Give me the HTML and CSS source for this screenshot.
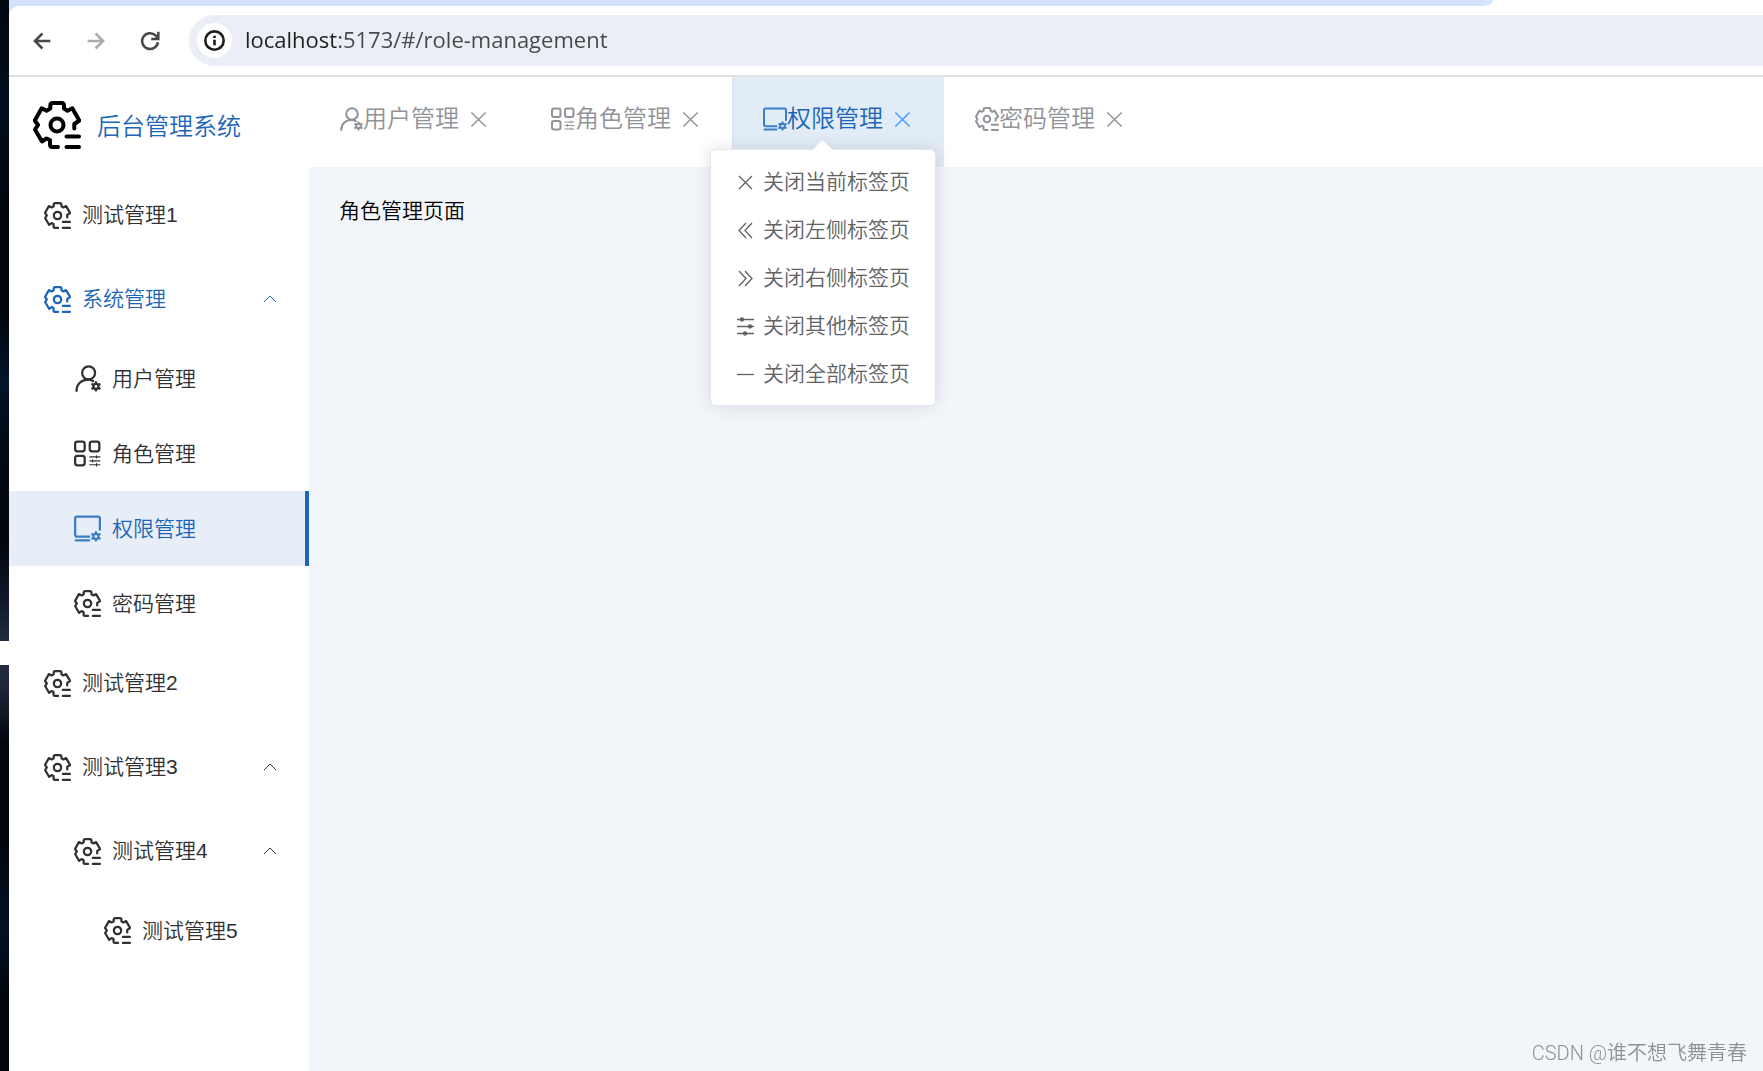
FILE: index.html
```html
<!DOCTYPE html>
<html lang="zh-CN">
<head>
    <meta charset="UTF-8">
    <meta name="viewport" content="width=device-width, initial-scale=1.0">
    <title>后台管理系统</title>
    <link rel="stylesheet" href="styles.css">
</head>
<body>
    <svg class="sprite" aria-hidden="true">
        <symbol id="i-gear" viewBox="0 0 48 48">
            <path d="M25 46h-5.500q-2.500 0-2.500-2.500V39l-3.500-1.500-4.500 3L2 28.500l3-4.500-3.200-4.500L8.700 7.300l4.800 2.400 3.800-2.200V4.500q0-2.500 2.500-2.500h8.700q2.500 0 2.500 2.500v3l3.500 2.200 4.800-2.400 7 12.200-5 3.500v4.500M33.500 35.500H46M33.500 46H46"/>
            <circle cx="24" cy="24" r="6.500"/>
        </symbol>
        <symbol id="i-cog" viewBox="0 0 20 20">
            <circle cx="10" cy="10" r="4.500"/>
            <path d="M10 4.500V2.500M10 15.500v2M5.200 7.200 3.500 6.200M14.800 12.800l1.700 1M5.200 12.800l-1.700 1M14.800 7.200l1.700-1"/>
        </symbol>
        <symbol id="i-user" viewBox="0 0 48 48">
            <circle cx="26" cy="14" r="11.500"/>
            <path d="M4.500 46C4.500 34 13 26 25 26q5 0 9 2.500"/>
            <use href="#i-cog" x="29" y="28" width="20" height="20"/>
        </symbol>
        <symbol id="i-role" viewBox="0 0 48 48">
            <rect x="2" y="3" width="17" height="17" rx="4"/>
            <rect x="28" y="3" width="17" height="17" rx="4"/>
            <rect x="2" y="28" width="17" height="17" rx="4"/>
            <path class="thin" d="M28 30h18M28 37h18M28 44h18M40 28v4M33 35v4M40 42v4"/>
        </symbol>
        <symbol id="i-screen" viewBox="0 0 48 48">
            <path d="M46 26V6q0-3-3-3H5Q2 3 2 6v29q0 3.500 3.500 3.500H27M3 45h24"/>
            <use href="#i-cog" x="29" y="28" width="20" height="20"/>
        </symbol>
        <symbol id="i-up" viewBox="0 0 14 8"><path d="M1 7l6-6 6 6"/></symbol>
        <symbol id="i-close" viewBox="0 0 21 21"><path d="M4 4l13 13M17 4L4 17"/></symbol>
        <symbol id="i-left" viewBox="0 0 21 21"><path d="M11 3l-7 7.500 7 7.500M17 3l-7 7.500 7 7.500"/></symbol>
        <symbol id="i-right" viewBox="0 0 21 21"><path d="M4 3l7 7.500L4 18M10 3l7 7.500-7 7.500"/></symbol>
        <symbol id="i-sliders" viewBox="0 0 21 21">
            <path d="M2 3.500h17M2 10.500h17M2 17.500h17"/>
            <g fill="currentColor"><circle cx="7" cy="3.500" r="1.500"/><circle cx="15" cy="10.500" r="1.500"/><circle cx="10" cy="17.500" r="1.500"/></g>
        </symbol>
        <symbol id="i-minus" viewBox="0 0 21 21"><path d="M2 10.500h17"/></symbol>
    </svg>

    <div class="desktop"></div>
    <div class="browser">
        <div class="tab-strip"></div>
        <div class="toolbar">
            <button class="tool" aria-label="back">
                <svg viewBox="0 0 24 24"><path d="M22 12H4M12.500 3l-9 9 9 9"/></svg>
            </button>
            <button class="tool" aria-label="forward" disabled>
                <svg viewBox="0 0 24 24"><path d="M2 12h18M11.500 3l9 9-9 9"/></svg>
            </button>
            <button class="tool" aria-label="reload">
                <svg viewBox="0 0 24 24"><path d="M21.500 13.500A9.500 9.500 0 1 1 18.700 5.300L21 8M22 1v8.500h-8.500"/></svg>
            </button>
            <div class="address">
                <button class="site-info" aria-label="site info">
                    <svg viewBox="0 0 24 24"><circle cx="12" cy="12" r="10.500"/><path d="M12 11v6.500M12 6.500v2.500"/></svg>
                </button>
                <input class="url" type="text" aria-label="url" value="localhost:5173/#/role-management">
            </div>
        </div>

        <div class="app">
            <aside class="sidebar">
                <div class="logo">
                    <svg class="icon"><use href="#i-gear"/></svg>
                    <span>后台管理系统</span>
                </div>
                <nav class="menu">
                    <a class="item" href="#/test1"><svg class="icon"><use href="#i-gear"/></svg>测试管理1</a>
                    <button class="item open"><svg class="icon"><use href="#i-gear"/></svg>系统管理<svg class="arrow"><use href="#i-up"/></svg></button>
                    <div class="sub">
                        <a class="item" href="#/user-management"><svg class="icon"><use href="#i-user"/></svg>用户管理</a>
                        <a class="item" href="#/role"><svg class="icon"><use href="#i-role"/></svg>角色管理</a>
                        <a class="item active" href="#/role-management"><svg class="icon"><use href="#i-screen"/></svg>权限管理</a>
                        <a class="item" href="#/password"><svg class="icon"><use href="#i-gear"/></svg>密码管理</a>
                    </div>
                    <a class="item" href="#/test2"><svg class="icon"><use href="#i-gear"/></svg>测试管理2</a>
                    <button class="item"><svg class="icon"><use href="#i-gear"/></svg>测试管理3<svg class="arrow"><use href="#i-up"/></svg></button>
                    <div class="sub">
                        <button class="item title"><svg class="icon"><use href="#i-gear"/></svg>测试管理4<svg class="arrow"><use href="#i-up"/></svg></button>
                        <div class="sub">
                            <a class="item" href="#/test5"><svg class="icon"><use href="#i-gear"/></svg>测试管理5</a>
                        </div>
                    </div>
                </nav>
            </aside>

            <div class="main">
                <div class="tabs">
                    <div class="tab">
                        <a href="#/user-management"><svg class="icon"><use href="#i-user"/></svg>用户管理</a>
                        <button class="close" aria-label="close"><svg><use href="#i-close"/></svg></button>
                    </div>
                    <div class="tab">
                        <a href="#/role"><svg class="icon"><use href="#i-role"/></svg>角色管理</a>
                        <button class="close" aria-label="close"><svg><use href="#i-close"/></svg></button>
                    </div>
                    <div class="tab active">
                        <a href="#/role-management"><svg class="icon"><use href="#i-screen"/></svg>权限管理</a>
                        <button class="close" aria-label="close"><svg><use href="#i-close"/></svg></button>
                        <div class="dropdown">
                            <button><svg><use href="#i-close"/></svg>关闭当前标签页</button>
                            <button><svg><use href="#i-left"/></svg>关闭左侧标签页</button>
                            <button><svg><use href="#i-right"/></svg>关闭右侧标签页</button>
                            <button><svg><use href="#i-sliders"/></svg>关闭其他标签页</button>
                            <button><svg><use href="#i-minus"/></svg>关闭全部标签页</button>
                        </div>
                    </div>
                    <div class="tab">
                        <a href="#/password"><svg class="icon"><use href="#i-gear"/></svg>密码管理</a>
                        <button class="close" aria-label="close"><svg><use href="#i-close"/></svg></button>
                    </div>
                </div>
                <main class="content">角色管理页面</main>
            </div>
        </div>
    </div>
    <div class="watermark">CSDN @谁不想飞舞青春</div>
</body>
</html>
```

FILE: styles.css
```css
*{
    box-sizing: border-box;
}
body{
    margin: 0;
    min-height: 100vh;
    display: flex;
    font-family: "Liberation Sans", "Noto Sans CJK SC", sans-serif;
    font-size: 21px;
    font-weight: 350;
    line-height: 30px;
    color: #000;
}
a{
    color: inherit;
    text-decoration: none;
}
button{
    margin: 0;
    padding: 0;
    border: 0;
    background: none;
    font: inherit;
    color: inherit;
    cursor: pointer;
}
svg{
    flex: none;
    fill: none;
    stroke: currentColor;
}
.sprite{
    position: absolute;
    width: 0;
    height: 0;
}
.icon{
    width: 27px;
    height: 27px;
    stroke-width: 4;
    stroke-linecap: round;
    stroke-linejoin: round;
}
.thin{
    stroke-width: 2;
}

/* wallpaper left of the window */
.desktop{
    flex: none;
    width: 9px;
    background: linear-gradient(#020812 0, #030d1c 110px, #01040b 220px, #01040b 310px, #04142b 380px, #020a16 440px, #02050c 540px, #10182a 600px, #232c40 641px, #fff 641px, #fff 665px, #232c40 665px, #1d2536 690px, #04060f 740px, #02050d 840px, #041226 930px, #01040b 1000px);
}
.browser{
    flex: 1;
    min-width: 0;
    display: flex;
    flex-direction: column;
    background: linear-gradient(90deg, #d3e3fd 20px, #fff 20px);
}
.tab-strip{
    height: 6px;
    margin-right: 270px;
    background: #d3e3fd;
    border-bottom-right-radius: 10px 6px;
}

/* browser toolbar */
.toolbar{
    display: flex;
    align-items: center;
    height: 71px;
    padding-left: 6px;
    border-bottom: 2px solid #e1e1e1;
    border-top-left-radius: 10px;
    background: #fff;
}
.tool{
    display: flex;
    align-items: center;
    justify-content: center;
    width: 54px;
    height: 54px;
    color: #474747;
}
.tool:disabled{
    color: #ababab;
}
.tool svg{
    width: 20px;
    height: 20px;
    stroke-width: 3;
}
.address{
    flex: 1;
    display: flex;
    align-items: center;
    gap: 13px;
    height: 51px;
    margin-left: 12px;
    padding-left: 8px;
    border-radius: 26px 0 0 26px;
    background: #ebeef7;
}
.site-info{
    display: flex;
    align-items: center;
    justify-content: center;
    width: 35px;
    height: 35px;
    border-radius: 50%;
    background: #fff;
    color: #1f1f1f;
}
.site-info svg{
    width: 21px;
    height: 21px;
    stroke-width: 3;
}
.url{
    flex: 1;
    min-width: 0;
    padding: 0 0 4px;
    border: 0;
    outline: 0;
    font: 400 22px "Open Sans", sans-serif;
    background: linear-gradient(90deg, #1f1f1f 92px, #474747 92px);
    -webkit-background-clip: text;
    background-clip: text;
    color: transparent;
}

/* page */
.app{
    flex: 1;
    display: flex;
    background: #fff;
}
.sidebar{
    flex: none;
    width: 300px;
    color: #303133;
}
.logo{
    display: flex;
    align-items: center;
    gap: 16px;
    height: 96px;
    padding-left: 24px;
    font-size: 24px;
    color: #1b66b8;
}
.logo span{
    padding-top: 3px;
}
.logo .icon{
    width: 48px;
    height: 48px;
    color: #000;
}
.item{
    display: flex;
    align-items: center;
    gap: 11px;
    width: 100%;
    height: 84px;
    padding-left: 35px;
    padding-right: 32px;
    text-align: left;
}
.sub .item{
    height: 75px;
    padding-left: 65px;
}
.sub .title{
    height: 84px;
}
.sub .sub .item{
    padding-left: 95px;
}
.open{
    color: #1b66b8;
}
.item.active{
    background: #e7eef7;
    border-right: 4px solid #1b66b8;
    color: #1b66b8;
}
.active .icon{
    color: #3a7fc9;
}
.arrow{
    width: 14px;
    height: 8px;
    margin-left: auto;
}

.main{
    flex: 1;
    min-width: 0;
    display: flex;
    flex-direction: column;
}
.tabs{
    display: flex;
    height: 90px;
    margin-left: -1px;
}
.tab{
    position: relative;
    display: flex;
    align-items: center;
    gap: 8px;
    padding: 0 30px 6px;
    border-left: 1px solid transparent;
    font-size: 24px;
    color: #909399;
}
.tab > a{
    display: flex;
    align-items: center;
}
.tab .icon{
    width: 24px;
    height: 24px;
}
.close{
    display: flex;
    justify-content: center;
    width: 23px;
}
.close svg{
    width: 23px;
    height: 23px;
    stroke-width: 1.3;
}
.tab.active{
    background: #e2ecf6;
    border-left-color: #d8e0ea;
    color: #1b66b8;
}
.active .close{
    color: #409eff;
}

.dropdown{
    position: absolute;
    z-index: 1;
    top: 72px;
    left: -23px;
    width: 226px;
    padding: 8px 0 7px;
    border: 1px solid #e4e7ed;
    border-radius: 6px;
    background: #fff;
    box-shadow: 0 0 18px rgba(0, 0, 0, 0.12);
    font-size: 21px;
    color: #606266;
}
.dropdown::before{
    content: "";
    position: absolute;
    top: -7px;
    left: 104px;
    width: 15px;
    height: 15px;
    border-radius: 3px 0 0 0;
    background: #fff;
    transform: rotate(45deg);
}
.dropdown button{
    position: relative;
    display: flex;
    align-items: center;
    gap: 7px;
    width: 100%;
    height: 48px;
    padding: 0 24px;
    white-space: nowrap;
}
.dropdown svg{
    width: 21px;
    height: 21px;
    stroke-width: 1.3;
}
.content{
    flex: 1;
    padding: 29px 30px;
    background: #f2f5fa;
}

.watermark{
    position: fixed;
    right: 16px;
    bottom: 3px;
    font-family: Roboto, "Noto Sans CJK SC", sans-serif;
    font-size: 20px;
    color: #8e9094;
}
```
